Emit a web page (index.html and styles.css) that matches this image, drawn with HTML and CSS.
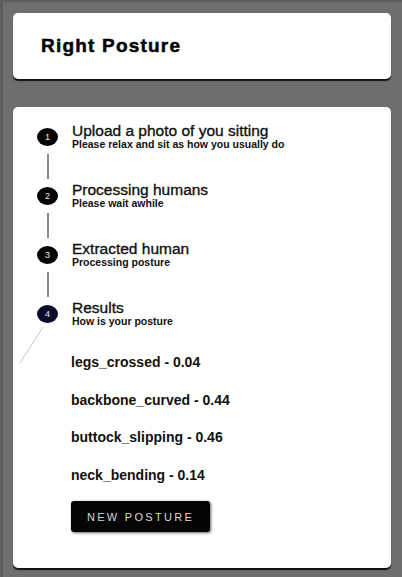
FILE: index.html
```html
<!DOCTYPE html>
<html lang="en">
<head>
  <meta charset="UTF-8" />
  <meta name="viewport" content="width=device-width, initial-scale=1.0" />
  <title>Right Posture</title>
  <link rel="stylesheet" href="styles.css">
</head>
<body>
  <div class="card header">
    <h1>Right Posture</h1>
  </div>

  <div class="card stepper">
    <div class="step">
      <span class="dot">1</span>
      <div class="step-text">
        <div class="step-title">Upload a photo of you sitting</div>
        <div class="step-sub">Please relax and sit as how you usually do</div>
      </div>
    </div>
    <div class="connector"></div>

    <div class="step">
      <span class="dot">2</span>
      <div class="step-text">
        <div class="step-title">Processing humans</div>
        <div class="step-sub">Please wait awhile</div>
      </div>
    </div>
    <div class="connector"></div>

    <div class="step">
      <span class="dot">3</span>
      <div class="step-text">
        <div class="step-title">Extracted human</div>
        <div class="step-sub">Processing posture</div>
      </div>
    </div>
    <div class="connector"></div>

    <div class="step">
      <span class="dot active">4</span>
      <div class="step-text">
        <div class="step-title">Results</div>
        <div class="step-sub">How is your posture</div>
      </div>
    </div>

    <svg class="tail" width="30" height="40" viewBox="0 0 30 40">
      <line x1="27" y1="1" x2="4" y2="37" stroke="#b5b5b5" stroke-width="0.8" />
    </svg>

    <div class="results">
      <div class="result">legs_crossed - 0.04</div>
      <div class="result">backbone_curved - 0.44</div>
      <div class="result">buttock_slipping - 0.46</div>
      <div class="result">neck_bending - 0.14</div>
      <button class="btn-new">New posture</button>
    </div>
  </div>
</body>
</html>
```

FILE: styles.css
```css
body {
  margin: 0;
  padding: 11px 11px 9px 13px;
  background: #6e6e6e;
  font-family: 'Liberation Sans', Arial, sans-serif;
  color: #111;
  height: 577px;
  box-sizing: border-box;
  display: flex;
  flex-direction: column;
  gap: 28px;
  border-top: 2px solid #5c5c5c;
  border-left: 3px solid #5c5c5c;
}

.card {
  background: #ffffff;
  border-radius: 5px;
  box-shadow: 0 2px 1px rgba(0, 0, 0, 0.85);
}

.header {
  height: 66px;
  display: flex;
  align-items: center;
  padding-left: 28px;
  margin-left: -3px;
}

h1 {
  margin: 0;
  font-size: 19px;
  font-weight: bold;
  letter-spacing: 1.2px;
  color: #050505;
  -webkit-text-stroke: 0.5px #050505;
}

.stepper {
  position: relative;
  flex: 1;
  margin-left: -3px;
  padding: 21px 0 0 24px;
}

.step {
  display: flex;
  align-items: flex-start;
  gap: 14px;
  height: 18px;
}

.dot {
  flex: none;
  width: 21px;
  height: 18px;
  border-radius: 50%;
  background: #050505;
  color: #e8e8e8;
  font-size: 9px;
  line-height: 18px;
  text-align: center;
}

.dot.active {
  background: #0b0b2c;
}

.step-text {
  margin-top: -5px;
}

.step-title {
  font-size: 15.5px;
  line-height: 16px;
  color: #111;
  -webkit-text-stroke: 0.35px #111;
}

.step-sub {
  font-size: 10.5px;
  line-height: 11px;
  font-weight: bold;
  color: #111;
}

.connector {
  height: 41px;
  display: flex;
  padding-left: 10px;
}

.connector::before {
  content: "";
  width: 1.5px;
  margin: 8px 0;
  background: #8a8a8a;
}

.tail {
  position: absolute;
  left: 3px;
  top: 219px;
}

.results {
  padding: 31px 0 0 34px;
}

.result {
  font-size: 14px;
  font-weight: bold;
  line-height: 16px;
  height: 37.5px;
  color: #111;
}

.btn-new {
  margin-top: -3px;
  width: 139px;
  height: 31px;
  background: #050505;
  color: #d8d8d8;
  border: none;
  border-radius: 3px;
  font-family: 'Liberation Sans', Arial, sans-serif;
  font-size: 11px;
  letter-spacing: 2.3px;
  text-transform: uppercase;
  box-shadow: 1px 1px 3px rgba(0, 0, 0, 0.6);
}
```
